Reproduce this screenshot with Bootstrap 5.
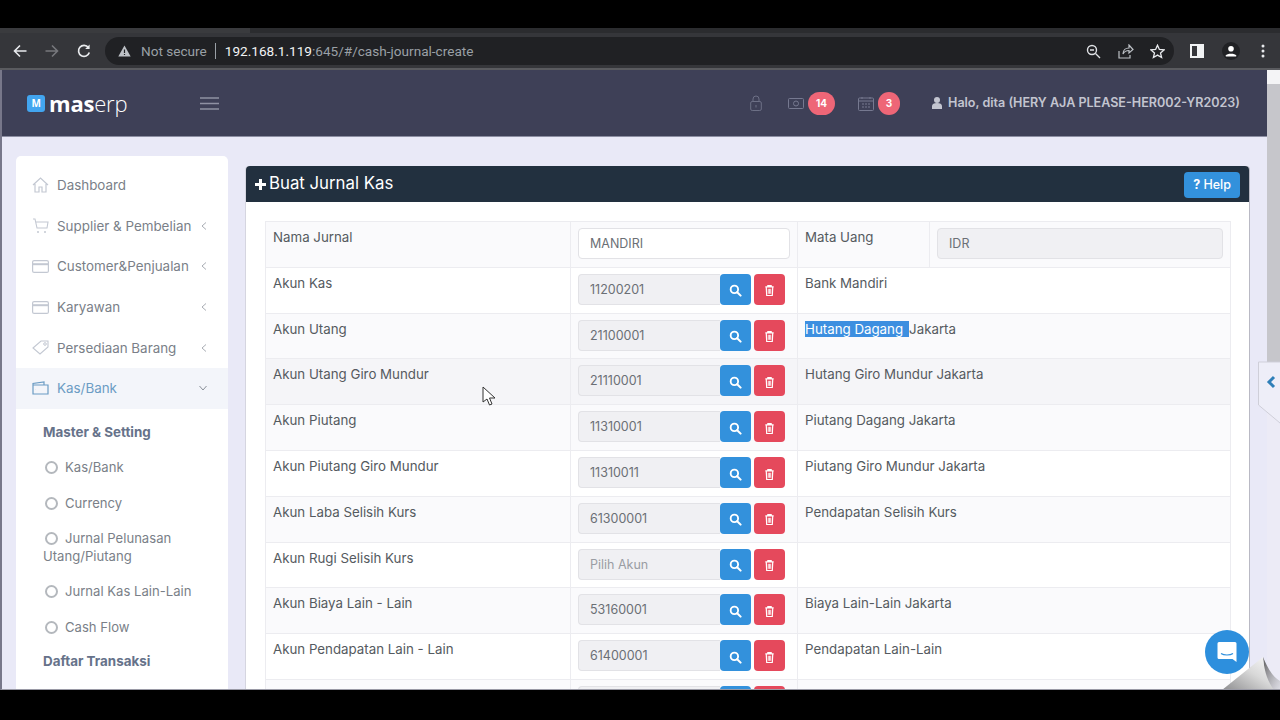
<!DOCTYPE html>
<html lang="id">
<head>
  <meta charset="UTF-8">
  <title>Buat Jurnal Kas</title>
  <link href="https://cdn.jsdelivr.net/npm/bootstrap@5.3.2/dist/css/bootstrap.min.css" rel="stylesheet">
  <style>
    html, body { height: 720px; overflow: hidden; background: #000; }
    body { font-family: "Inter", "Open Sans", sans-serif; font-size: 13px; color: #555a60; }
    .bar-black { height: 28px; background: #000; }
    .bar-bottom { height: 30px; background: #000; }
    .tab-strip { height: 5px; background: #2b2c2f; }
    .tab-strip i { display: block; width: 250px; height: 5px; background: #3a3b3e; }
    .chrome { height: 37px; background: #35363a; border-bottom: 2px solid #5a5b5f; color: #e8eaed; padding: 1px 0 0 12px; font-family: "Roboto", sans-serif; }
    .chrome svg { flex: none; }
    .omnibox { height: 28px; width: 1069px; margin-left: 13px; background: #202124; border-radius: 15px; padding: 0 9px 0 13px; font-size: 13.6px; }
    .omni-muted { color: #9aa0a6; }
    .omni-host { color: #f1f3f4; }
    .omni-sep { width: 1px; height: 16px; background: #9aa0a6; margin: 0 9px 0 8px; }
    .not-secure { margin-left: 10px; }
    .app { height: 620px; position: relative; overflow: hidden; background: #e9e9f7; }
    .app::after { content: ""; position: absolute; left: 0; top: 0; bottom: 0; right: 0; border-left: 2px solid #77778a; border-bottom: 1px solid #9a9aa6; pointer-events: none; }
    .topbar { height: 67px; background: #3e4057; padding: 0 40px 0 27px; color: #c5c7d2; border-bottom: 1px solid #8c8ea2; }
    .brand { font-family: "Open Sans", sans-serif; font-size: 22px; color: #fff; line-height: 1; width: 173px; letter-spacing: -.2px; }
    .brand-mark { width: 18px; height: 17px; background: #42a5f0; border-radius: 3px; color: #fff; font-size: 10px; font-weight: 700; margin-right: 4px; }
    .brand b { font-weight: 700; }
    .brand span.thin { font-weight: 300; }
    .topbar-badge { background: #ee6677; color: #fff; font-size: 10px; font-weight: 700; height: 23px; border-radius: 12px; }
    .user-label { font-size: 12.55px; font-weight: 600; color: #c3c5d0; white-space: nowrap; margin-left: 6px; }
    .layout { height: 553px; padding: 19px 31px 0 16px; gap: 18px; }
    .side-panel { width: 212px; flex: none; background: #fff; border-radius: 5px 5px 0 0; padding-top: 9px; height: 600px; }
    .side-item { height: 40.6px; padding: 0 20px 0 16px; color: #7a7f88; font-size: 13.4px; white-space: nowrap; }
    .side-item .ico { width: 17px; margin-right: 8px; flex: none; }
    .side-item .arrow { margin-left: auto; color: #a9adb4; }
    .side-item.active { background: #f3f5fa; color: #6b9cc4; }
    .side-head { padding: 0 10px 0 27px; font-weight: 700; color: #66728a; font-size: 13.4px; }
    .side-sub { padding: 0 10px 0 27px; color: #7a7f88; font-size: 13.1px; line-height: 18px; }
    .ring { display: inline-block; width: 13px; height: 13px; border: 2px solid #b4b8bd; border-radius: 50%; margin: 0 7px 0 2px; vertical-align: -2px; }
    .main-panel { width: 1003px; flex: none; margin-top: 10px; height: 600px; border: 0; border-radius: 4px 4px 0 0; background: #fff; box-shadow: 1px 0 0 #b9b9c4, -1px 0 0 #d5d5e0; }
    .main-head { height: 36px; background: #22303f; border-radius: 4px 4px 0 0; color: #fff; font-size: 16.8px; padding: 0 9px 0 9px; }
    .main-title { gap: 3px; }
    .btn-help { background: #3391dc; color: #fff; font-size: 12.5px; font-weight: 500; height: 26px; padding: 0 9px; border-radius: 4px; border: 0; line-height: 26px; margin-top: 2px; }
    .btn-help:hover { background: #3391dc; color: #fff; }
    .panel-body { padding: 19px 19px 0 19px; }
    .jurnal-table { width: 965px; table-layout: fixed; margin: 0; border-color: #ececf0; font-size: 13.3px; }
    .jurnal-table td { padding: 6px 7px 7.8px; vertical-align: top; color: #555a60; --bs-table-color: #555a60; --bs-table-bg-type: initial; line-height: 19px; }
    .jurnal-table tr:nth-child(odd) > td { background: #fafafc; }
    .jurnal-table tr:nth-child(4) > td { background: #f5f5f8; }
    .field { height: 31px; font-size: 12.5px; color: #6b6f75; border: 1px solid #e2e2e6; border-radius: 4px; padding: 0 11px; box-shadow: none; }
    .field:disabled, .field[readonly] { background: #f0f0f3; opacity: 1; }
    .field::placeholder { color: #9a9da3; }
    .field-short { width: 142px; flex: none; border-radius: 4px 0 0 4px; border-right: 0; }
    .btn-cari, .btn-hapus { width: 31px; height: 31px; border: 0; padding: 0; flex: none; border-radius: 4px; }
    .btn-cari { background: #3391dc; color: #fff; }
    .btn-hapus { background: #e5495c; color: #fff; margin-left: 3px; }
    .btn-cari:hover { background: #3391dc; }
    .btn-hapus:hover { background: #e5495c; }
    .picked { background: #3d8fe0; color: #fff; padding-right: 6px; }
    .scroll-rail { position: absolute; right: 0; top: 0; width: 13px; height: 620px; background: #ecebf6; }
    .scroll-rail i { display: block; margin-top: 14px; height: 280px; background: #c6c6cb; }
    .rail-up { position: absolute; right: 0; top: 0; width: 13px; height: 14px; background: #f4f4f6; }
    .chat-bubble { position: absolute; left: 1205px; top: 560px; width: 44px; height: 44px; background: #2d8fdd; border-radius: 50%; }
    .page-curl { position: absolute; left: 1220px; top: 585px; }
    .cursor-arrow { position: absolute; left: 482px; top: 316px; }
    .side-tab { position: absolute; left: 1258px; top: 291px; }
  </style>
</head>
<body>
  <svg width="0" height="0" class="position-absolute">
    <symbol id="i-search" viewBox="0 0 14 14"><circle cx="5.800" cy="5.800" r="4" fill="none" stroke="currentColor" stroke-width="2"/><path d="M8.800 8.800 12.500 12.500" stroke="currentColor" stroke-width="2.200" stroke-linecap="round"/></symbol>
    <symbol id="i-trash" viewBox="0 0 14 14"><path d="M2.500 3.200h9M5.200 3V1.800h3.600V3M3.500 3.400l.5 9h6l.5-9" fill="none" stroke="currentColor" stroke-width="1.300"/><path d="M5.700 5.200v5.400M7 5.200v5.400M8.300 5.200v5.400" stroke="currentColor" stroke-width=".9"/></symbol>
    <symbol id="i-card" viewBox="0 0 17 13"><rect x=".6" y=".6" width="15.800" height="11.800" rx="1.500" fill="none" stroke="#c3c8d2" stroke-width="1.200"/><path d="M.6 4.200h15.800" stroke="#c3c8d2" stroke-width="2"/></symbol>
    <symbol id="i-left" viewBox="0 0 8 10"><path d="M6 1.500 2 5l4 3.500" fill="none" stroke="currentColor" stroke-width="1"/></symbol>
  </svg>

  <div class="bar-black"></div>
  <div class="tab-strip"><i></i></div>

  <div class="chrome d-flex align-items-center">
    <svg width="16" height="16" viewBox="0 0 16 16"><path d="M14.500 8H2.500M8 2.500 2.500 8 8 13.500" fill="none" stroke="#e8eaed" stroke-width="1.600"/></svg>
    <svg class="ms-3" width="16" height="16" viewBox="0 0 16 16"><path d="M1.500 8h12M8 2.500 13.500 8 8 13.500" fill="none" stroke="#77787c" stroke-width="1.600"/></svg>
    <svg class="ms-3" width="16" height="16" viewBox="0 0 16 16"><path d="M13.300 9.500a5.500 5.500 0 1 1-.9-5" fill="none" stroke="#e8eaed" stroke-width="1.700"/><path d="M13.600 1.500v4.400H9.200z" fill="#e8eaed"/></svg>
    <div class="omnibox d-flex align-items-center">
      <svg width="13" height="12" viewBox="0 0 13 12"><path d="M6.500.5 12.700 11.500H.3z" fill="#bdc1c6"/><path d="M6.500 4.500v3.500M6.500 9v1" stroke="#202124" stroke-width="1.200"/></svg>
      <span class="omni-muted not-secure">Not secure</span>
      <span class="omni-sep"></span>
      <span class="omni-host">192.168.1.119<span class="omni-muted">:645/#/cash-journal-create</span></span>
      <svg class="ms-auto" width="15" height="15" viewBox="0 0 15 15" style="margin-right:1px"><circle cx="6" cy="6" r="4.500" fill="none" stroke="#dfe1e5" stroke-width="1.400"/><path d="M9.500 9.500 14 14M4 6h4" stroke="#dfe1e5" stroke-width="1.400"/></svg>
      <svg class="ms-3" width="16" height="15" viewBox="0 0 16 15"><path d="M1 7v7h11v-3M5 10c0-4 3-6 6-6V1l4 4.500L11 9V6.500C8 6.500 6 8 5 10z" fill="none" stroke="#bdc1c6" stroke-width="1.200"/></svg>
      <svg class="ms-3" width="15" height="15" viewBox="0 0 15 15"><path d="M7.500 1.200 9.400 5.500l4.600.4-3.500 3 1.100 4.600-4.100-2.400-4.100 2.400 1.100-4.600L1 5.900l4.600-.4z" fill="none" stroke="#e8eaed" stroke-width="1.300"/></svg>
    </div>
    <svg width="14" height="14" viewBox="0 0 14 14" style="margin-left:16px"><path d="M0 0h14v14H0z" fill="#f1f3f4"/><path d="M2 2h5v10H2z" fill="#35363a"/></svg>
    <svg width="18" height="18" viewBox="0 0 18 18" style="margin-left:18px"><circle cx="9" cy="9" r="9" fill="#202124"/><circle cx="9" cy="6.800" r="2.800" fill="#fff"/><path d="M3.800 13.500c1-2.400 9.400-2.400 10.400 0v1H3.800z" fill="#fff"/></svg>
    <svg width="4" height="14" viewBox="0 0 4 14" style="margin-left:21px"><circle cx="2" cy="2" r="1.500" fill="#e8eaed"/><circle cx="2" cy="7" r="1.500" fill="#e8eaed"/><circle cx="2" cy="12" r="1.500" fill="#e8eaed"/></svg>
  </div>

  <div class="app">
    <div class="topbar d-flex align-items-center">
      <div class="brand d-flex align-items-center">
        <span class="brand-mark d-inline-flex align-items-center justify-content-center">M</span><b>mas</b><span class="thin">erp</span>
      </div>
      <svg width="19" height="13" viewBox="0 0 19 13"><path d="M0 1h19M0 6.500h19M0 12h19" stroke="#8f91a3" stroke-width="1.700"/></svg>
      <div class="ms-auto d-flex align-items-center">
        <svg width="12" height="16" viewBox="0 0 12 16"><path d="M3 7V4a3 3 0 0 1 6 0v3" fill="none" stroke="#6d7086" stroke-width="1"/><rect x=".7" y="6.500" width="10.600" height="9" rx="1.500" fill="none" stroke="#6d7086"/><path d="M6 10v2.500" stroke="#6d7086"/></svg>
        <svg width="16" height="11" viewBox="0 0 16 11" style="margin-left:26px"><rect x=".5" y=".5" width="15" height="10" rx="1" fill="none" stroke="#767990"/><circle cx="8" cy="5.500" r="2.500" fill="none" stroke="#767990"/></svg>
        <span class="topbar-badge d-inline-flex align-items-center justify-content-center ms-1" style="width:27px">14</span>
        <svg width="16" height="15" viewBox="0 0 16 15" style="margin-left:23px"><rect x=".5" y="2" width="15" height="12.500" rx="1" fill="none" stroke="#767990"/><path d="M.5 5h15M4 1v2M12 1v2M4 8h2M7 8h2M10 8h2M4 11h2M7 11h2M10 11h2" stroke="#767990"/></svg>
        <span class="topbar-badge d-inline-flex align-items-center justify-content-center ms-1" style="width:22px">3</span>
        <svg width="10" height="12" viewBox="0 0 10 12" style="margin-left:32px"><circle cx="5" cy="3" r="3" fill="#c3c5d0"/><path d="M0 12V9c0-2 2-3 5-3s5 1 5 3v3z" fill="#c3c5d0"/></svg>
        <span class="user-label">Halo, dita (HERY AJA PLEASE-HER002-YR2023)</span>
      </div>
    </div>

    <div class="layout d-flex align-items-start">
      <aside class="side-panel">
        <div class="side-item d-flex align-items-center">
          <svg class="ico" width="17" height="16" viewBox="0 0 17 16"><path d="M1 8 8.500 1 16 8M3 7v8h4v-5h3v5h4V7" fill="none" stroke="#c3c8d2" stroke-width="1.200"/></svg>Dashboard
        </div>
        <div class="side-item d-flex align-items-center">
          <svg class="ico" width="17" height="16" viewBox="0 0 17 16"><path d="M1 1h2l2 9h10l1-6H4" fill="none" stroke="#c3c8d2" stroke-width="1.100"/><circle cx="6" cy="14" r="1" fill="#c3c8d2"/><circle cx="13" cy="14" r="1" fill="#c3c8d2"/></svg>Supplier &amp; Pembelian
          <svg class="arrow" width="8" height="10"><use href="#i-left"/></svg>
        </div>
        <div class="side-item d-flex align-items-center">
          <svg class="ico" width="17" height="13"><use href="#i-card"/></svg>Customer&amp;Penjualan
          <svg class="arrow" width="8" height="10"><use href="#i-left"/></svg>
        </div>
        <div class="side-item d-flex align-items-center">
          <svg class="ico" width="17" height="13"><use href="#i-card"/></svg>Karyawan
          <svg class="arrow" width="8" height="10"><use href="#i-left"/></svg>
        </div>
        <div class="side-item d-flex align-items-center">
          <svg class="ico" width="17" height="15" viewBox="0 0 17 15"><path d="M1 8 9 1h7v6l-8 7z" fill="none" stroke="#c3c8d2" stroke-width="1.100"/><circle cx="13" cy="4" r="1.300" fill="none" stroke="#c3c8d2"/></svg>Persediaan Barang
          <svg class="arrow" width="8" height="10"><use href="#i-left"/></svg>
        </div>
        <div class="side-item active d-flex align-items-center">
          <svg class="ico" width="17" height="14" viewBox="0 0 17 14"><path d="M1 4V2.500L12 1v3M1 4h15v9H1zM3.500 8.500h.1" fill="none" stroke="#6b9cc4" stroke-width="1.200"/></svg>Kas/Bank
          <svg class="arrow" width="10" height="8" viewBox="0 0 10 8"><path d="M1.500 2 5 6l3.500-4" fill="none" stroke="#8a9099" stroke-width="1"/></svg>
        </div>
        <div class="side-head" style="margin-top:13px">Master &amp; Setting</div>
        <div class="side-sub" style="margin-top:16px"><span class="ring"></span>Kas/Bank</div>
        <div class="side-sub" style="margin-top:18px"><span class="ring"></span>Currency</div>
        <div class="side-sub" style="margin-top:17px"><span class="ring"></span>Jurnal Pelunasan Utang/Piutang</div>
        <div class="side-sub" style="margin-top:17px"><span class="ring"></span>Jurnal Kas Lain-Lain</div>
        <div class="side-sub" style="margin-top:18px"><span class="ring"></span>Cash Flow</div>
        <div class="side-head" style="margin-top:15px">Daftar Transaksi</div>
      </aside>

      <main class="main-panel">
        <div class="main-head d-flex align-items-center justify-content-between">
          <span class="main-title d-flex align-items-center">
            <svg width="11" height="11" viewBox="0 0 11 11"><path d="M5.500 0v11M0 5.500h11" stroke="#fff" stroke-width="3"/></svg>Buat Jurnal Kas
          </span>
          <button class="btn btn-help"><b>?</b> Help</button>
        </div>
        <div class="panel-body">
          <table class="table table-bordered jurnal-table">
            <colgroup><col style="width:305px"><col style="width:227px"><col style="width:132px"><col style="width:301px"></colgroup>
            <tbody>
              <tr><td>Nama Jurnal</td><td><input class="form-control field" value="MANDIRI"></td><td>Mata Uang</td><td><input class="form-control field" value="IDR" disabled></td></tr>
              <tr><td>Akun Kas</td><td><div class="d-flex"><input class="form-control field field-short" value="11200201" readonly><button class="btn btn-cari"><svg width="13" height="13"><use href="#i-search"/></svg></button><button class="btn btn-hapus"><svg width="13" height="13"><use href="#i-trash"/></svg></button></div></td><td colspan="2">Bank Mandiri</td></tr>
              <tr><td>Akun Utang</td><td><div class="d-flex"><input class="form-control field field-short" value="21100001" readonly><button class="btn btn-cari"><svg width="13" height="13"><use href="#i-search"/></svg></button><button class="btn btn-hapus"><svg width="13" height="13"><use href="#i-trash"/></svg></button></div></td><td colspan="2"><span class="picked">Hutang Dagang</span>Jakarta</td></tr>
              <tr><td>Akun Utang Giro Mundur</td><td><div class="d-flex"><input class="form-control field field-short" value="21110001" readonly><button class="btn btn-cari"><svg width="13" height="13"><use href="#i-search"/></svg></button><button class="btn btn-hapus"><svg width="13" height="13"><use href="#i-trash"/></svg></button></div></td><td colspan="2">Hutang Giro Mundur Jakarta</td></tr>
              <tr><td>Akun Piutang</td><td><div class="d-flex"><input class="form-control field field-short" value="11310001" readonly><button class="btn btn-cari"><svg width="13" height="13"><use href="#i-search"/></svg></button><button class="btn btn-hapus"><svg width="13" height="13"><use href="#i-trash"/></svg></button></div></td><td colspan="2">Piutang Dagang Jakarta</td></tr>
              <tr><td>Akun Piutang Giro Mundur</td><td><div class="d-flex"><input class="form-control field field-short" value="11310011" readonly><button class="btn btn-cari"><svg width="13" height="13"><use href="#i-search"/></svg></button><button class="btn btn-hapus"><svg width="13" height="13"><use href="#i-trash"/></svg></button></div></td><td colspan="2">Piutang Giro Mundur Jakarta</td></tr>
              <tr><td>Akun Laba Selisih Kurs</td><td><div class="d-flex"><input class="form-control field field-short" value="61300001" readonly><button class="btn btn-cari"><svg width="13" height="13"><use href="#i-search"/></svg></button><button class="btn btn-hapus"><svg width="13" height="13"><use href="#i-trash"/></svg></button></div></td><td colspan="2">Pendapatan Selisih Kurs</td></tr>
              <tr><td>Akun Rugi Selisih Kurs</td><td><div class="d-flex"><input class="form-control field field-short" placeholder="Pilih Akun" readonly><button class="btn btn-cari"><svg width="13" height="13"><use href="#i-search"/></svg></button><button class="btn btn-hapus"><svg width="13" height="13"><use href="#i-trash"/></svg></button></div></td><td colspan="2"></td></tr>
              <tr><td>Akun Biaya Lain - Lain</td><td><div class="d-flex"><input class="form-control field field-short" value="53160001" readonly><button class="btn btn-cari"><svg width="13" height="13"><use href="#i-search"/></svg></button><button class="btn btn-hapus"><svg width="13" height="13"><use href="#i-trash"/></svg></button></div></td><td colspan="2">Biaya Lain-Lain Jakarta</td></tr>
              <tr><td>Akun Pendapatan Lain - Lain</td><td><div class="d-flex"><input class="form-control field field-short" value="61400001" readonly><button class="btn btn-cari"><svg width="13" height="13"><use href="#i-search"/></svg></button><button class="btn btn-hapus"><svg width="13" height="13"><use href="#i-trash"/></svg></button></div></td><td colspan="2">Pendapatan Lain-Lain</td></tr>
              <tr><td></td><td><div class="d-flex"><input class="form-control field field-short" readonly><button class="btn btn-cari"></button><button class="btn btn-hapus"></button></div></td><td colspan="2"></td></tr>
            </tbody>
          </table>
        </div>
      </main>
    </div>

    <div class="scroll-rail"><i></i></div>
    <div class="rail-up"></div>
    <svg class="side-tab" width="22" height="63" viewBox="0 0 22 63"><path d="M22 1H.5v43L22 62" fill="#eeeef8" stroke="#cfcfd9"/></svg>
    <svg class="position-absolute" style="left:1266px;top:305px" width="11" height="14" viewBox="0 0 11 14"><path d="M8 2 3 7l5 5" fill="none" stroke="#2f7fb8" stroke-width="3"/></svg>
    <svg class="cursor-arrow" width="14" height="20" viewBox="0 0 14 20"><path d="M1 1v15l4-3 2.500 6 2.500-1-2.500-6H13z" fill="#fff" stroke="#333" stroke-width="1"/></svg>
    <div class="chat-bubble d-flex align-items-center justify-content-center">
      <svg width="20" height="22" viewBox="0 0 20 22"><path d="M2 1h16a1.500 1.500 0 0 1 1.500 1.500V21l-4-3H2A1.500 1.500 0 0 1 .5 16.500v-14A1.500 1.500 0 0 1 2 1z" fill="#fff"/><path d="M4 12.500c3 2 9 2 12 0" fill="none" stroke="#2d8fdd" stroke-width="1.200"/></svg>
    </div>
    <svg class="page-curl" width="60" height="35" viewBox="0 0 60 35">
      <defs>
        <linearGradient id="curlFace" x1="0" y1="1" x2="1" y2="0"><stop offset="0" stop-color="#8e8e90"/><stop offset=".55" stop-color="#d8d8d8"/><stop offset="1" stop-color="#fafafa"/></linearGradient>
        <linearGradient id="curlShade" x1="0" y1="0" x2="1" y2="1"><stop offset="0" stop-color="#555"/><stop offset="1" stop-color="#c4c4c8" stop-opacity=".4"/></linearGradient>
      </defs>
      <path d="M43 2c4 10 9 19 17 24v9H46z" fill="url(#curlShade)"/>
      <path d="M2 35 43 2c1 12 4 24 11 33z" fill="url(#curlFace)"/>
    </svg>
  </div>

  <div class="bar-bottom"></div>
</body>
</html>
